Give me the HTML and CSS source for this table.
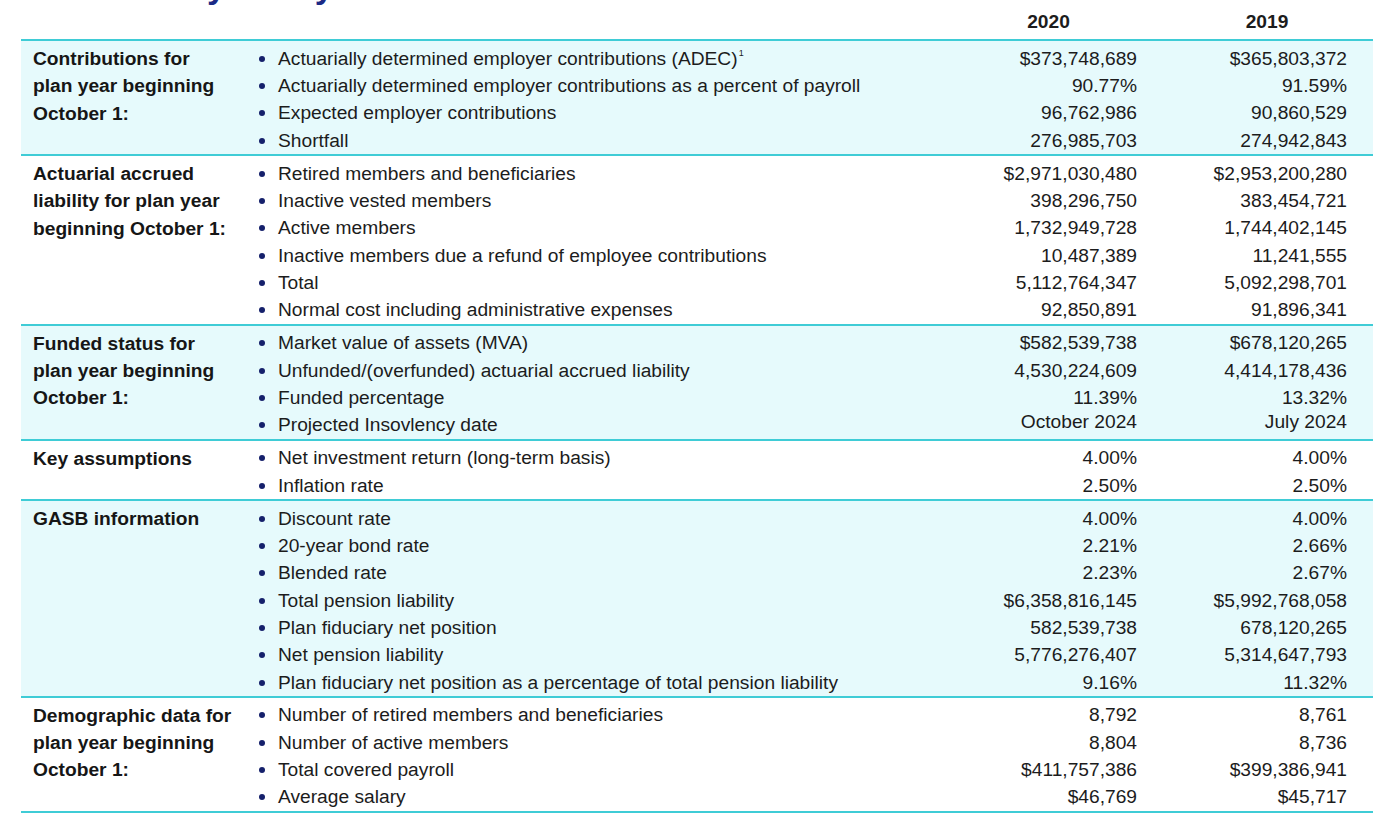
FILE: index.html
```html
<!DOCTYPE html>
<html lang="en">
<head>
<meta charset="utf-8">
<title>Summary of key results</title>
<link rel="stylesheet" href="styles.css">
</head>
<body>
<div class="page">
  <h1 class="title">Summary of key valuation results</h1>
  <div class="head">
    <div class="head-spacer"></div>
    <div class="head-y1">2020</div>
    <div class="head-y2">2019</div>
  </div>
  <div class="table">
    <section class="sec shade">
      <div class="label">Contributions for<br>plan year beginning<br>October 1:</div>
      <div class="rows">
        <div class="row"><div class="item">Actuarially determined employer contributions (ADEC)<sup>1</sup></div><div class="v1">$373,748,689</div><div class="v2">$365,803,372</div></div>
        <div class="row"><div class="item">Actuarially determined employer contributions as a percent of payroll</div><div class="v1">90.77%</div><div class="v2">91.59%</div></div>
        <div class="row"><div class="item">Expected employer contributions</div><div class="v1">96,762,986</div><div class="v2">90,860,529</div></div>
        <div class="row"><div class="item">Shortfall</div><div class="v1">276,985,703</div><div class="v2">274,942,843</div></div>
      </div>
    </section>
    <section class="sec">
      <div class="label">Actuarial accrued<br>liability for plan year<br>beginning October 1:</div>
      <div class="rows">
        <div class="row"><div class="item">Retired members and beneficiaries</div><div class="v1">$2,971,030,480</div><div class="v2">$2,953,200,280</div></div>
        <div class="row"><div class="item">Inactive vested members</div><div class="v1">398,296,750</div><div class="v2">383,454,721</div></div>
        <div class="row"><div class="item">Active members</div><div class="v1">1,732,949,728</div><div class="v2">1,744,402,145</div></div>
        <div class="row"><div class="item">Inactive members due a refund of employee contributions</div><div class="v1">10,487,389</div><div class="v2">11,241,555</div></div>
        <div class="row"><div class="item">Total</div><div class="v1">5,112,764,347</div><div class="v2">5,092,298,701</div></div>
        <div class="row"><div class="item">Normal cost including administrative expenses</div><div class="v1">92,850,891</div><div class="v2">91,896,341</div></div>
      </div>
    </section>
    <section class="sec shade">
      <div class="label">Funded status for<br>plan year beginning<br>October 1:</div>
      <div class="rows">
        <div class="row"><div class="item">Market value of assets (MVA)</div><div class="v1">$582,539,738</div><div class="v2">$678,120,265</div></div>
        <div class="row"><div class="item">Unfunded/(overfunded) actuarial accrued liability</div><div class="v1">4,530,224,609</div><div class="v2">4,414,178,436</div></div>
        <div class="row"><div class="item">Funded percentage</div><div class="v1">11.39%</div><div class="v2">13.32%</div></div>
        <div class="row"><div class="item">Projected Insovlency date</div><div class="v1 up">October 2024</div><div class="v2 up">July 2024</div></div>
      </div>
    </section>
    <section class="sec">
      <div class="label">Key assumptions</div>
      <div class="rows">
        <div class="row"><div class="item">Net investment return (long-term basis)</div><div class="v1">4.00%</div><div class="v2">4.00%</div></div>
        <div class="row"><div class="item">Inflation rate</div><div class="v1">2.50%</div><div class="v2">2.50%</div></div>
      </div>
    </section>
    <section class="sec shade">
      <div class="label">GASB information</div>
      <div class="rows">
        <div class="row"><div class="item">Discount rate</div><div class="v1">4.00%</div><div class="v2">4.00%</div></div>
        <div class="row"><div class="item">20-year bond rate</div><div class="v1">2.21%</div><div class="v2">2.66%</div></div>
        <div class="row"><div class="item">Blended rate</div><div class="v1">2.23%</div><div class="v2">2.67%</div></div>
        <div class="row"><div class="item">Total pension liability</div><div class="v1">$6,358,816,145</div><div class="v2">$5,992,768,058</div></div>
        <div class="row"><div class="item">Plan fiduciary net position</div><div class="v1">582,539,738</div><div class="v2">678,120,265</div></div>
        <div class="row"><div class="item">Net pension liability</div><div class="v1">5,776,276,407</div><div class="v2">5,314,647,793</div></div>
        <div class="row"><div class="item">Plan fiduciary net position as a percentage of total pension liability</div><div class="v1">9.16%</div><div class="v2">11.32%</div></div>
      </div>
    </section>
    <section class="sec">
      <div class="label">Demographic data for<br>plan year beginning<br>October 1:</div>
      <div class="rows">
        <div class="row"><div class="item">Number of retired members and beneficiaries</div><div class="v1">8,792</div><div class="v2">8,761</div></div>
        <div class="row"><div class="item">Number of active members</div><div class="v1">8,804</div><div class="v2">8,736</div></div>
        <div class="row"><div class="item">Total covered payroll</div><div class="v1">$411,757,386</div><div class="v2">$399,386,941</div></div>
        <div class="row"><div class="item">Average salary</div><div class="v1">$46,769</div><div class="v2">$45,717</div></div>
      </div>
    </section>
  </div>
</div>
</body>
</html>
```

FILE: styles.css
```css
* { box-sizing: border-box; }
html, body { margin: 0; padding: 0; background: #ffffff; overflow: hidden; }
body {
  font-family: "Liberation Sans", Arial, sans-serif;
  font-size: 19.2px;
  color: #1c1c1c;
}
.page {
  width: 1352px;
  margin-left: 21px;
}
.title {
  margin: -31px 0 0 50px;
  height: 34px;
  font-size: 34px;
  line-height: 34px;
  font-weight: bold;
  color: #1b2a86;
  white-space: nowrap;
}
.head {
  display: grid;
  grid-template-columns: 939px 183px 230px;
  height: 36.3px;
  padding-top: 5px;
  font-weight: bold;
  line-height: 27.4px;
}
.head-y1 { text-align: center; padding-right: 6px; }
.head-y2 { text-align: center; padding-left: 44px; padding-right: 26px; }
.table {
  border-top: 2px solid #3fccd6;
}
.sec {
  display: flex;
  padding: 2px 0 1.63px 0;
  border-bottom: 2px solid #3fccd6;
  line-height: 27.33px;
}
.sec.shade { background: #e6fafc; }
.label {
  width: 229px;
  flex: none;
  padding-left: 12px;
  padding-top: 1.8px;
  font-weight: bold;
  color: #161616;
}
.rows { flex: 1; display: flex; flex-direction: column; }
.row {
  display: grid;
  grid-template-columns: 710px 183px 230px;
  height: 27.33px;
  padding-top: 1.5px;
}
.item {
  white-space: nowrap;
}
.item::before {
  content: "";
  display: inline-block;
  vertical-align: 3px;
  width: 6px;
  height: 6px;
  border-radius: 50%;
  background: #15206b;
  margin-left: 9px;
  margin-right: 13px;
}
.item sup {
  font-size: 9px;
  line-height: 0;
  vertical-align: 9px;
  margin-left: 1px;
}
.v1 { text-align: right; padding-right: 6px; }
.v2 { text-align: right; padding-right: 26px; }
.up { margin-top: -3px; }
```
